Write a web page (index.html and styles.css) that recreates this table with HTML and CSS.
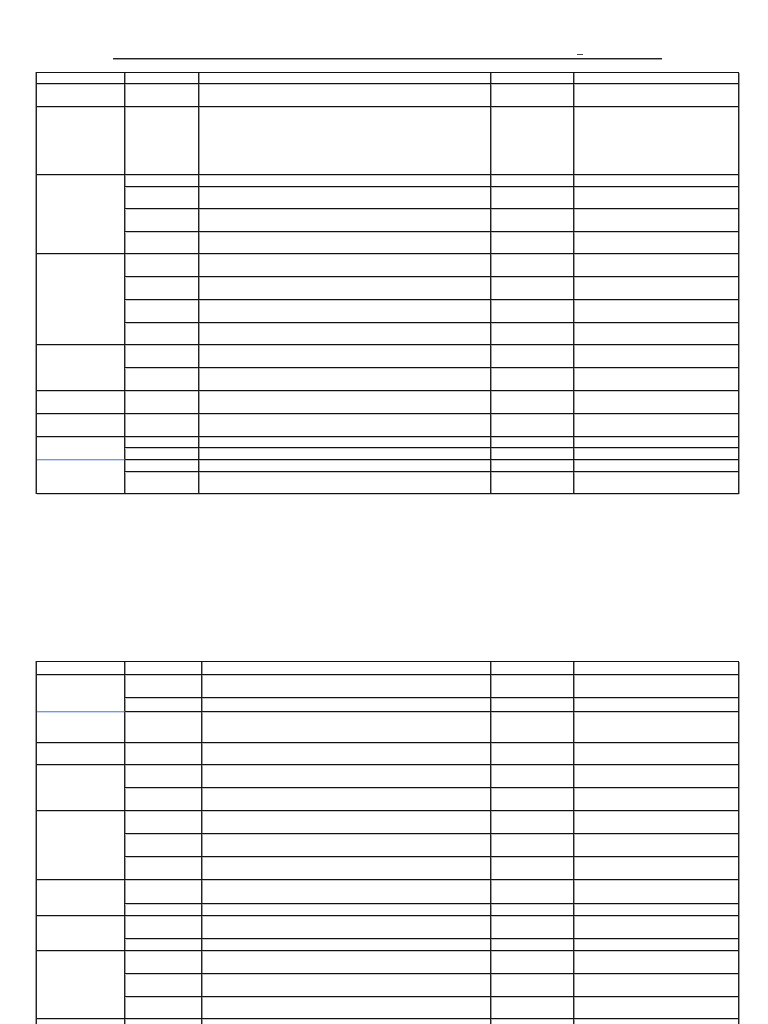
FILE: index.html
```html
<!DOCTYPE html>
<html lang="en">
<head>
<meta charset="utf-8">
<title>Form</title>
<link rel="stylesheet" href="styles.css">
</head>
<body>
<div class="title"><span class="mark"></span></div>

<div class="grid t1">
  <div></div><div></div><div></div><div></div><div></div>
  <div></div><div></div><div></div><div></div><div></div>
  <div></div><div></div><div></div><div></div><div></div>
  <div class="s4"></div><div></div><div></div><div></div><div></div>
  <div></div><div></div><div></div><div></div>
  <div></div><div></div><div></div><div></div>
  <div></div><div></div><div></div><div></div>
  <div class="s4"></div><div></div><div></div><div></div><div></div>
  <div></div><div></div><div></div><div></div>
  <div></div><div></div><div></div><div></div>
  <div></div><div></div><div></div><div></div>
  <div class="s2"></div><div></div><div></div><div></div><div></div>
  <div></div><div></div><div></div><div></div>
  <div></div><div></div><div></div><div></div><div></div>
  <div></div><div></div><div></div><div></div><div></div>
  <div class="s2 blue"></div><div></div><div></div><div></div><div></div>
  <div></div><div></div><div></div><div></div>
  <div class="s2"></div><div></div><div></div><div></div><div></div>
  <div></div><div></div><div></div><div></div>
</div>

<div class="grid t2">
  <div></div><div></div><div></div><div></div><div></div>
  <div class="s2 blue"></div><div></div><div></div><div></div><div></div>
  <div></div><div></div><div></div><div></div>
  <div></div><div></div><div></div><div></div><div></div>
  <div></div><div></div><div></div><div></div><div></div>
  <div class="s2"></div><div></div><div></div><div></div><div></div>
  <div></div><div></div><div></div><div></div>
  <div class="s3"></div><div></div><div></div><div></div><div></div>
  <div></div><div></div><div></div><div></div>
  <div></div><div></div><div></div><div></div>
  <div class="s2"></div><div></div><div></div><div></div><div></div>
  <div></div><div></div><div></div><div></div>
  <div class="s2"></div><div></div><div></div><div></div><div></div>
  <div></div><div></div><div></div><div></div>
  <div class="s3"></div><div></div><div></div><div></div><div></div>
  <div></div><div></div><div></div><div></div>
  <div></div><div></div><div></div><div></div>
  <div></div><div></div><div></div><div></div><div></div>
</div>
</body>
</html>
```

FILE: styles.css
```css
html, body {
  margin: 0;
  padding: 0;
  background: #ffffff;
  font-family: "Liberation Sans", Arial, sans-serif;
}

.title {
  margin-left: 113px;
  width: 85px;
  height: 55px;
  padding-left: 464px;
  padding-bottom: 3px;
  box-sizing: content-box;
  border-bottom: 1px solid #222;
  box-shadow: 0 1px 0 #9a9a9a;
  display: flex;
  align-items: flex-end;
}

.mark {
  display: block;
  width: 6px;
  height: 1px;
  background: #444;
}

.grid {
  display: grid;
  margin-left: 36px;
  width: max-content;
  border-top: 1px solid #111;
  border-left: 1px solid #222;
  box-shadow: -1px 0 0 #999;
}

.grid > div {
  border-right: 1px solid #222;
  border-bottom: 1px solid #111;
  box-shadow: 1px 0 0 #999, 0 1px 0 #c4c4c4;
}

.grid > .s2 { grid-row: span 2; }
.grid > .s3 { grid-row: span 3; }
.grid > .s4 { grid-row: span 4; }
.grid > .blue { border-bottom-color: #6f9bd8; box-shadow: 1px 0 0 #999, 0 1px 0 #c9daf2; }

.t1 {
  margin-top: 13px;
  grid-template-columns: 88px 74px 292px 83px 165px;
  grid-template-rows: 11px 23px 68px 12px 22px 23px 22px 23px 23px 23px 22px 23px 23px 23px 23px 11px 12px 12px 22px;
}

.t2 {
  margin-top: 167px;
  grid-template-columns: 88px 77px 289px 83px 165px;
  grid-template-rows: 13px 23px 14px 31px 22px 23px 23px 23px 23px 23px 24px 12px 23px 12px 23px 23px 22px 23px;
}
```
